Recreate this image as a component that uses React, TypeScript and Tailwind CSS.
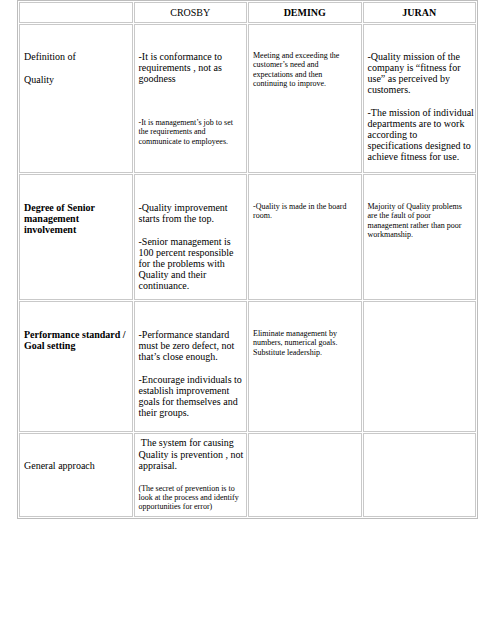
type Line = string;

const serif = { fontFamily: '"Liberation Serif", "Times New Roman", serif' };

function Para({ lines, className = "" }: { lines: Line[]; className?: string }) {
  return (
    <div className={className}>
      {lines.map((line) => (
        <div key={line} className="whitespace-pre">
          {line}
        </div>
      ))}
    </div>
  );
}

function Cell({ children, className = "" }: { children?: React.ReactNode; className?: string }) {
  return <div className={`border border-[#c9c9c9] px-[4px] ${className}`}>{children}</div>;
}

export default function App() {
  return (
    <div className="min-h-[640px] w-[495px] bg-white text-black" style={serif}>
      <div className="ml-[17px] grid w-[461px] grid-cols-4 grid-rows-[21px_149px_126px_131px_84px] gap-[1px] border border-[#bdbdbd] p-[1px]">
        {/* header */}
        <Cell />
        <Cell className="flex items-center justify-center text-[10px]">CROSBY</Cell>
        <Cell className="flex items-center justify-center text-[10px] font-bold">DEMING</Cell>
        <Cell className="flex items-center justify-center text-[10px] font-bold">JURAN</Cell>

        {/* definition of quality */}
        <Cell className="pt-[26px] text-[10px] leading-[11px]">
          <Para lines={["Definition of"]} />
          <Para lines={["Quality"]} className="mt-[12px]" />
        </Cell>
        <Cell className="pt-[26px]">
          <Para
            className="text-[10px] leading-[11px]"
            lines={["-It is conformance to", "requirements , not as", "goodness"]}
          />
          <Para
            className="mt-[34px] text-[8px] leading-[9.3px]"
            lines={["-It is management\u2019s job to set", "the requirements and", "communicate to employees."]}
          />
        </Cell>
        <Cell className="pt-[26px] text-[8px] leading-[9.3px]">
          <Para
            lines={[
              "Meeting and exceeding the",
              "customer\u2019s need and",
              "expectations and then",
              "continuing to improve.",
            ]}
          />
        </Cell>
        <Cell className="pt-[26px] text-[10px] leading-[11px]">
          <Para
            lines={["-Quality mission of the", "company is \u201cfitness for", "use\u201d as perceived by", "customers."]}
          />
          <Para
            className="mt-[12px]"
            lines={[
              "-The mission of individual",
              "departments are to work",
              "according to",
              "specifications designed to",
              "achieve fitness for use.",
            ]}
          />
        </Cell>

        {/* senior management */}
        <Cell className="pt-[27px] text-[10px] font-bold leading-[11px]">
          <Para lines={["Degree of Senior", "management", "involvement"]} />
        </Cell>
        <Cell className="pt-[27px] text-[10px] leading-[11px]">
          <Para lines={["-Quality improvement", "starts from the top."]} />
          <Para
            className="mt-[12px]"
            lines={[
              "-Senior management is",
              "100 percent responsible",
              "for the problems with",
              "Quality and their",
              "continuance.",
            ]}
          />
        </Cell>
        <Cell className="pt-[27px] text-[8px] leading-[9.3px]">
          <Para lines={["-Quality is made in the board", "room."]} />
        </Cell>
        <Cell className="pt-[27px] text-[8px] leading-[9.3px]">
          <Para
            lines={[
              "Majority of Quality problems",
              "are the fault of poor",
              "management rather than poor",
              "workmanship.",
            ]}
          />
        </Cell>

        {/* performance standard */}
        <Cell className="pt-[27px] text-[10px] font-bold leading-[11px]">
          <Para lines={["Performance standard /", "Goal setting"]} />
        </Cell>
        <Cell className="pt-[27px] text-[10px] leading-[11px]">
          <Para lines={["-Performance standard", "must be zero defect, not", "that\u2019s close enough."]} />
          <Para
            className="mt-[12px]"
            lines={[
              "-Encourage individuals to",
              "establish improvement",
              "goals for themselves and",
              "their groups.",
            ]}
          />
        </Cell>
        <Cell className="pt-[27px] text-[8px] leading-[9.3px]">
          <Para
            lines={["Eliminate management by", "numbers, numerical goals.", "Substitute leadership."]}
          />
        </Cell>
        <Cell />

        {/* general approach */}
        <Cell className="pt-[26px] text-[10px] leading-[11px]">
          <Para lines={["General approach"]} />
        </Cell>
        <Cell className="pt-[3px]">
          <Para
            className="text-[10px] leading-[11.5px]"
            lines={[" The system for causing", "Quality is prevention , not", "appraisal."]}
          />
          <Para
            className="mt-[12px] text-[8px] leading-[9.3px]"
            lines={[
              "(The secret of prevention is to",
              "look at the process and identify",
              "opportunities for error)",
            ]}
          />
        </Cell>
        <Cell />
        <Cell />
      </div>
    </div>
  );
}
